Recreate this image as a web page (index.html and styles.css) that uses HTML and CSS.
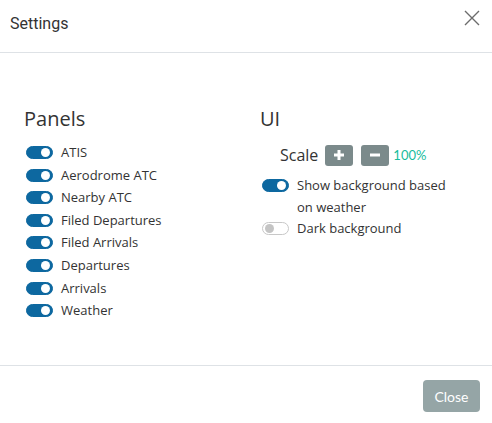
FILE: index.html
```html
<!DOCTYPE html>
<html>
<head>
<meta charset="utf-8">
<link rel="stylesheet" href="styles.css">
</head>
<body>
<div class="modal">
  <div class="modal-header">
    <h5 class="modal-title">Settings</h5>
    <button class="btn-x" aria-label="Close">
      <svg width="16" height="16" viewBox="0 0 16 16"><path d="M1 1L15 15M15 1L1 15" stroke="#6c6c6c" stroke-width="1.4" fill="none"/></svg>
    </button>
  </div>
  <div class="modal-body">
    <div class="col">
      <h4 class="section-title">Panels</h4>
      <ul class="toggles">
        <li><span class="switch on"></span><span>ATIS</span></li>
        <li><span class="switch on"></span><span>Aerodrome ATC</span></li>
        <li><span class="switch on"></span><span>Nearby ATC</span></li>
        <li><span class="switch on"></span><span>Filed Departures</span></li>
        <li><span class="switch on"></span><span>Filed Arrivals</span></li>
        <li><span class="switch on"></span><span>Departures</span></li>
        <li><span class="switch on"></span><span>Arrivals</span></li>
        <li><span class="switch on"></span><span>Weather</span></li>
      </ul>
    </div>
    <div class="col">
      <h4 class="section-title">UI</h4>
      <div class="scale">
        <span class="scale-label">Scale</span>
        <button class="btn-sq"><svg width="12" height="12" viewBox="0 0 12 12"><path d="M6 1V11M1 6H11" stroke="#fff" stroke-width="3"/></svg></button>
        <button class="btn-sq"><svg width="12" height="12" viewBox="0 0 12 12"><path d="M1 6H11" stroke="#fff" stroke-width="3"/></svg></button>
        <span class="pct">100%</span>
      </div>
      <ul class="toggles ui">
        <li><span class="switch on"></span><span>Show background based on weather</span></li>
        <li><span class="switch"></span><span>Dark background</span></li>
      </ul>
    </div>
  </div>
  <div class="modal-footer">
    <button class="btn-close">Close</button>
  </div>
</div>
</body>
</html>
```
FILE: styles.css
```css
* { box-sizing: border-box; }
html, body { margin: 0; padding: 0; background: #fff; }
body { font-family: "Open Sans", "Noto Sans", sans-serif; color: #333; }
.modal { width: 492px; height: 423px; display: flex; flex-direction: column; }
.modal-header {
  height: 53px;
  border-bottom: 1px solid #dee2e6;
  display: flex;
  align-items: flex-start;
  justify-content: space-between;
  padding: 13px 12px 0 10px;
}
.modal-title { margin: 0; font-family: Roboto, sans-serif; font-weight: 400; font-size: 16px; color: #333; line-height: 22px; }
.btn-x { border: 0; background: none; padding: 0; margin-top: -3px; width: 16px; height: 16px; cursor: pointer; }
.modal-body {
  flex: 1;
  display: grid;
  grid-template-columns: 236px 1fr;
  padding: 52px 0 0 24px;
}
.section-title { margin: 0 0 8px; font-weight: 400; font-size: 20px; line-height: 28px; color: #333; }
.toggles { list-style: none; margin: 0; padding: 0; }
.toggles li { display: flex; align-items: flex-start; font-size: 13px; line-height: 22.6px; color: #333; }
.switch {
  flex: none;
  width: 27px; height: 13px;
  border-radius: 7px;
  border: 1px solid #c8c8c8;
  background: #fff;
  margin: 5px 8px 0 2px;
  position: relative;
}
.switch::after {
  content: "";
  position: absolute;
  top: 1px; left: 2px;
  width: 9px; height: 9px;
  border-radius: 50%;
  background: #c4c4c4;
}
.switch.on { background: #0d68a0; border-color: #0d68a0; }
.switch.on::after { left: 14px; background: #fff; }
.scale { display: flex; align-items: center; padding-left: 20px; margin: 11px 0 9px; }
.scale-label { font-size: 16px; margin-right: 6px; }
.btn-sq {
  width: 28px; height: 21px;
  border: 0; border-radius: 3px;
  background: #7b8a8b;
  display: flex; align-items: center; justify-content: center;
  margin-right: 8px; padding: 0;
}
.btn-sq:first-of-type { margin-left: 1px; }
.btn-sq + .btn-sq { margin-right: 4px; }
.pct { font-family: Lato, sans-serif; font-size: 13px; color: #18bc9c; }
.toggles.ui li { width: 200px; line-height: 21.5px; }
.toggles.ui .switch { margin-top: 4px; }
.modal-footer {
  height: 58px;
  border-top: 1px solid #dee2e6;
  display: flex;
  justify-content: flex-end;
  align-items: flex-start;
  padding: 14px 12px 0 0;
}
.btn-close {
  font-family: Lato, sans-serif;
  font-size: 14px;
  color: #fff;
  background: #95a5a6;
  border: 0;
  border-radius: 4px;
  width: 57px; height: 32px;
  padding: 0;
}
```
